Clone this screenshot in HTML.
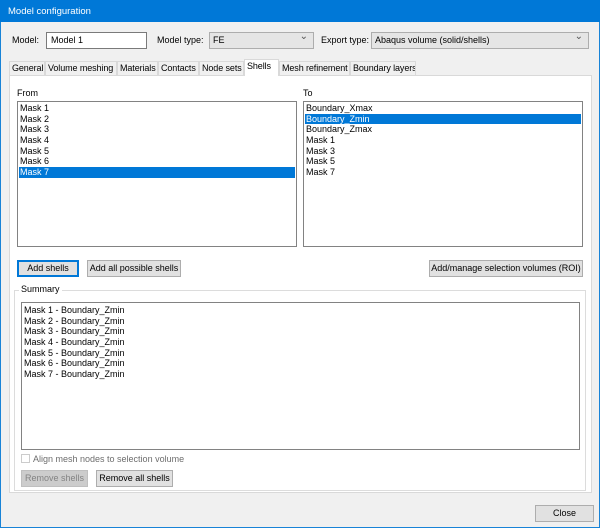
<!DOCTYPE html><html><head><style>
*{margin:0;padding:0;box-sizing:border-box}
body{width:600px;height:528px;background:#f0f0f0;font-family:"Liberation Sans",sans-serif;font-size:9px;color:#000;position:relative;overflow:hidden;border:1px solid #1883d7}
.a{position:absolute}
.title{left:-1px;top:-1px;width:600px;height:22px;background:#0078d7;color:#fff;font-size:9.5px;padding:6px 0 0 8px}
.inp{background:#fff;border:1px solid #7a7a7a;padding:2px 4px}
.cmb{background:#e5e5e5;border:1px solid #adadad;padding:2px 3px}
.cmb:after{content:"⌄";position:absolute;right:5px;top:-2px;color:#555;font-size:10px}
.tab{top:61px;height:14px;border:1px solid #d9d9d9;border-bottom:none;background:#f0f0f0;padding:1px 2px;white-space:nowrap;overflow:hidden;letter-spacing:-0.1px}
.list{background:#fff;border:1px solid #828282;padding:1px 1px}
.list div{height:10.7px;line-height:10.7px;padding-left:1px}
.sel{background:#0078d7;color:#fff}
.btn{background:#e1e1e1;border:1px solid #adadad;text-align:center;line-height:15px;height:17px;white-space:nowrap}
</style></head><body>
<div class="a title">Model configuration</div>
<div class="a" style="left:11px;top:34px">Model:</div>
<div class="a inp" style="left:45px;top:31px;width:101px;height:17px">Model 1</div>
<div class="a" style="left:156px;top:34px">Model type:</div>
<div class="a cmb" style="left:208px;top:31px;width:105px;height:17px">FE</div>
<div class="a" style="left:320px;top:34px">Export type:</div>
<div class="a cmb" style="left:370px;top:31px;width:218px;height:17px">Abaqus volume (solid/shells)</div>
<div class="a" style="left:8px;top:74px;width:583px;height:418px;background:#fff;border:1px solid #d9d9d9"></div>
<div class="a tab" style="left:8px;top:60px;width:36px">General</div>
<div class="a tab" style="left:44px;top:60px;width:72px">Volume meshing</div>
<div class="a tab" style="left:116px;top:60px;width:41px">Materials</div>
<div class="a tab" style="left:157px;top:60px;width:41px">Contacts</div>
<div class="a tab" style="left:198px;top:60px;width:45px">Node sets</div>
<div class="a tab" style="left:243px;top:58px;height:17px;width:35px;background:#fff">Shells</div>
<div class="a tab" style="left:278px;top:60px;width:71px">Mesh refinement</div>
<div class="a tab" style="left:349px;top:60px;width:66px">Boundary layers</div>
<div class="a" style="left:16px;top:87px">From</div>
<div class="a" style="left:302px;top:87px">To</div>
<div class="a list" style="left:16px;top:100px;width:280px;height:146px">
<div>Mask 1</div><div>Mask 2</div><div>Mask 3</div><div>Mask 4</div><div>Mask 5</div><div>Mask 6</div><div class="sel">Mask 7</div></div>
<div class="a list" style="left:302px;top:100px;width:280px;height:146px">
<div>Boundary_Xmax</div><div class="sel">Boundary_Zmin</div><div>Boundary_Zmax</div><div>Mask 1</div><div>Mask 3</div><div>Mask 5</div><div>Mask 7</div></div>
<div class="a btn" style="left:16px;top:259px;width:62px;border:1px solid #0078d7;box-shadow:inset 0 0 0 1px #0078d7">Add shells</div>
<div class="a btn" style="left:86px;top:259px;width:94px">Add all possible shells</div>
<div class="a btn" style="left:428px;top:259px;width:154px">Add/manage selection volumes (ROI)</div>
<div class="a" style="left:13px;top:289px;width:572px;height:201px;border:1px solid #dcdcdc"></div>
<div class="a" style="left:18px;top:283px;background:#fff;padding:0 2px">Summary</div>
<div class="a list" style="left:20px;top:301px;width:559px;height:148px;padding-top:2px">
<div>Mask 1 - Boundary_Zmin</div><div>Mask 2 - Boundary_Zmin</div><div>Mask 3 - Boundary_Zmin</div><div>Mask 4 - Boundary_Zmin</div><div>Mask 5 - Boundary_Zmin</div><div>Mask 6 - Boundary_Zmin</div><div>Mask 7 - Boundary_Zmin</div></div>
<div class="a" style="left:20px;top:453px;width:9px;height:9px;border:1px solid #ccc"></div>
<div class="a" style="left:32px;top:453px;color:#6d6d6d">Align mesh nodes to selection volume</div>
<div class="a btn" style="left:20px;top:469px;width:67px;background:#ccc;border-color:#bfbfbf;color:#838383">Remove shells</div>
<div class="a btn" style="left:95px;top:469px;width:77px">Remove all shells</div>
<div class="a btn" style="left:534px;top:504px;width:59px">Close</div>
</body></html>
